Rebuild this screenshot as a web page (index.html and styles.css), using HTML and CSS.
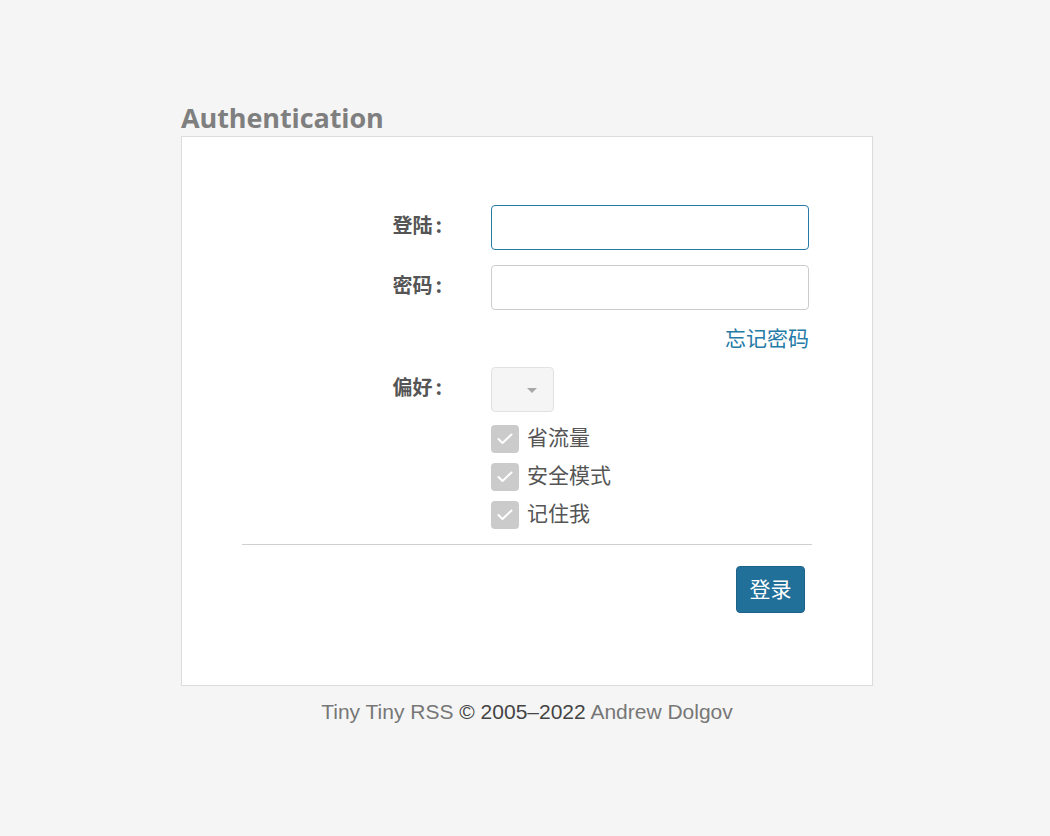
FILE: index.html
```html
<!DOCTYPE html>
<html lang="zh">
<head>
<meta charset="utf-8">
<title>Tiny Tiny RSS : Login</title>
<link rel="stylesheet" href="styles.css">
</head>
<body>
<div class="wrap">
  <h1 class="title">Authentication</h1>
  <div class="panel">
    <div class="row">
      <label class="lbl">登陆<span class="colon">:</span></label>
      <div class="ctl"><input class="input focus" type="text"></div>
    </div>
    <div class="row">
      <label class="lbl">密码<span class="colon">:</span></label>
      <div class="ctl"><input class="input" type="password"></div>
    </div>
    <div class="forgot-row"><a class="forgot" href="#">忘记密码</a></div>
    <div class="row">
      <label class="lbl">偏好<span class="colon">:</span></label>
      <div class="ctl">
        <div class="select"><span class="caret"></span></div>
      </div>
    </div>
    <div class="checks">
      <div class="check"><span class="box"><svg viewBox="0 0 28 28" width="28" height="28"><path d="M7.5 14 L11.5 18 L20.5 9.5" fill="none" stroke="#fff" stroke-width="2" stroke-linecap="round" stroke-linejoin="round"/></svg></span><span class="ctext">省流量</span></div>
      <div class="check"><span class="box"><svg viewBox="0 0 28 28" width="28" height="28"><path d="M7.5 14 L11.5 18 L20.5 9.5" fill="none" stroke="#fff" stroke-width="2" stroke-linecap="round" stroke-linejoin="round"/></svg></span><span class="ctext">安全模式</span></div>
      <div class="check"><span class="box"><svg viewBox="0 0 28 28" width="28" height="28"><path d="M7.5 14 L11.5 18 L20.5 9.5" fill="none" stroke="#fff" stroke-width="2" stroke-linecap="round" stroke-linejoin="round"/></svg></span><span class="ctext">记住我</span></div>
    </div>
    <hr class="sep">
    <div class="actions"><button class="btn">登录</button></div>
  </div>
  <div class="footer"><a href="#">Tiny Tiny RSS</a> © 2005–2022 <a href="#">Andrew Dolgov</a></div>
</div>
</body>
</html>
```
FILE: styles.css
```css
html, body {
  margin: 0;
  padding: 0;
  background: #f5f5f5;
}
body {
  font-family: "Liberation Sans", "Noto Sans CJK SC", sans-serif;
  color: #555;
}
.wrap {
  width: 692px;
  margin: 0 auto;
  padding-top: 100px;
  transform: translateX(2px);
}
.title {
  font-family: "Open Sans", "Noto Sans", sans-serif;
  font-weight: 700;
  font-size: 27px;
  line-height: 36px;
  color: #7f7f7f;
  margin: 0;
  letter-spacing: -0.1px;
}
.panel {
  background: #fff;
  border: 1px solid #dcdcdc;
  padding: 68px 60px 72px;
}
.row {
  display: flex;
  align-items: center;
  margin-bottom: 15px;
}
.lbl {
  width: 200px;
  text-align: right;
  margin-right: 49px;
  font-family: "Noto Sans CJK SC", sans-serif;
  font-weight: 700;
  font-size: 20px;
  line-height: 24px;
  color: #555;
  position: relative;
  top: -3px;
}
.colon {
  padding-left: 3px;
}
.ctl {
  width: 318px;
}
.input {
  display: block;
  width: 318px;
  height: 45px;
  box-sizing: border-box;
  border: 1px solid #ccc;
  border-radius: 4px;
  background: #fff;
  outline: none;
  margin: 0;
  padding: 0 10px;
}
.input.focus {
  border-color: #257aa6;
}
.forgot-row {
  width: 567px;
  text-align: right;
  margin-top: -5px;
  margin-bottom: 9px;
  line-height: 35px;
}
.forgot {
  font-family: "Noto Sans CJK SC", sans-serif;
  font-size: 21px;
  color: #257aa6;
  text-decoration: none;
}
.select {
  width: 63px;
  height: 45px;
  box-sizing: border-box;
  background: #f5f5f5;
  border: 1px solid #e2e2e2;
  border-radius: 4px;
  position: relative;
}
.caret {
  position: absolute;
  left: 35px;
  top: 20px;
  width: 0;
  height: 0;
  border-left: 5px solid transparent;
  border-right: 5px solid transparent;
  border-top: 5px solid #a8a8a8;
}
.checks {
  margin-left: 249px;
  margin-top: -2px;
  display: flex;
  flex-direction: column;
  gap: 10px;
}
.check {
  display: flex;
  align-items: center;
  height: 28px;
}
.box {
  width: 28px;
  height: 28px;
  border-radius: 4px;
  background: #cbcbcb;
  display: block;
  margin-right: 8px;
  flex: none;
}
.box svg { display: block; }
.ctext {
  font-family: "Noto Sans CJK SC", sans-serif;
  font-size: 21px;
  line-height: 24px;
  color: #555;
  position: relative;
  top: -3px;
}
.sep {
  border: 0;
  border-top: 1px solid #cfcfcf;
  margin: 15px 0 0;
  width: 570px;
}
.actions {
  width: 563px;
  display: flex;
  justify-content: flex-end;
  margin-top: 21px;
}
.btn {
  width: 69px;
  height: 47px;
  background: #21709a;
  border: 1px solid #1d6389;
  border-radius: 4px;
  color: #fff;
  font-family: "Noto Sans CJK SC", sans-serif;
  font-size: 21px;
  line-height: 24px;
  padding: 0 0 3px;
}
.footer {
  text-align: center;
  margin-top: 13px;
  font-size: 21px;
  color: #444;
  line-height: 26px;
}
.footer a {
  color: #777;
  text-decoration: none;
}
```
